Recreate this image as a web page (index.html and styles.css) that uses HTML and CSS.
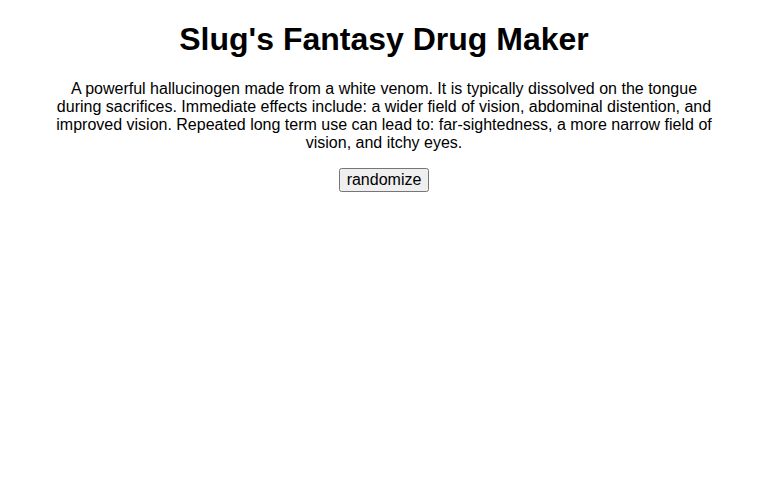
FILE: index.html
```html
<!DOCTYPE html>
<html lang="en">

<head>
    <meta charset="UTF-8">
    <meta name="viewport" content="width=device-width, initial-scale=1.0">
    <title>Slug's Fantasy Drug Maker</title>
    <link rel="stylesheet" href="styles.css">
</head>

<body>
    <div class="maker">
        <h1>Slug's Fantasy Drug Maker</h1>
        <p id="description">A powerful hallucinogen made from a white venom. It is typically dissolved on the tongue during sacrifices. Immediate effects include: a wider field of vision, abdominal distention, and improved vision. Repeated long term use can lead to: far-sightedness, a more narrow field of vision, and itchy eyes.</p>
        <button class="randomize" onclick="randomize()">randomize</button>
    </div>

    <script>
        const strengths = ['A powerful', 'A mild', 'A potent', 'A weak'];
        const kinds = ['hallucinogen', 'stimulant', 'sedative', 'euphoric'];
        const sources = ['a white venom', 'a crushed beetle', 'a rare moss', 'a blue mushroom'];
        const methods = ['dissolved on the tongue', 'smoked in a pipe', 'brewed as a tea', 'rubbed on the skin'];
        const occasions = ['during sacrifices', 'at festivals', 'before battle', 'in secret'];
        const shortEffects = ['a wider field of vision', 'abdominal distention', 'improved vision', 'euphoria', 'numb fingers'];
        const longEffects = ['far-sightedness', 'a more narrow field of vision', 'itchy eyes', 'hair loss', 'insomnia'];

        function pick(list) {
            return list[Math.floor(Math.random() * list.length)];
        }

        function pickSome(list, n) {
            const copy = list.slice().sort(() => Math.random() - 0.5);
            return copy.slice(0, n);
        }

        function joinList(items) {
            return items.slice(0, -1).join(', ') + ', and ' + items[items.length - 1];
        }

        function randomize() {
            const text = pick(strengths) + ' ' + pick(kinds) + ' made from ' + pick(sources) +
                '. It is typically ' + pick(methods) + ' ' + pick(occasions) +
                '. Immediate effects include: ' + joinList(pickSome(shortEffects, 3)) +
                '. Repeated long term use can lead to: ' + joinList(pickSome(longEffects, 3)) + '.';
            document.getElementById('description').textContent = text;
        }
    </script>
</body>

</html>
```

FILE: styles.css
```css
body {
    margin: 8px;
    font-family: "Liberation Sans", Arial, sans-serif;
    color: #000;
    background-color: #fff;
}

.maker {
    max-width: 670px;
    margin: 0 auto;
    text-align: center;
}

h1 {
    font-size: 32px;
    margin: 13px 0 22px;
}

p {
    font-size: 16px;
    line-height: 18px;
    margin: 16px 0;
}

.randomize {
    font-family: inherit;
    font-size: 16px;
}
```
